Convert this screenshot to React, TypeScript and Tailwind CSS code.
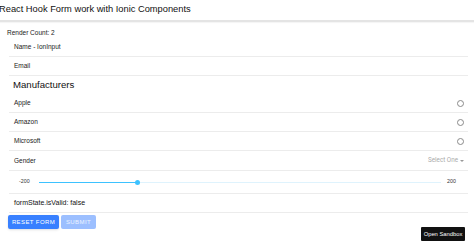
import React from 'react';

const font = { fontFamily: '"Liberation Sans", Arial, sans-serif' };

const Row = ({ children, h = 'h-[19px]', pr = 'pr-[4px]' }: { children: React.ReactNode; h?: string; pr?: string }) => (
  <div className={`flex items-center ${h} ml-[9px] mr-[6px] pl-[5px] ${pr} border-b border-[#ececec]`}>
    {children}
  </div>
);

const Radio = () => (
  <span className="w-[7px] h-[7px] rounded-full border border-[#8a8a8a] box-border" />
);

export default function App() {
  return (
    <div className="relative w-[474px] h-[248px] bg-white text-[#222] overflow-hidden" style={font}>
      <div className="h-[22px] flex items-center border-b-2 border-[#e4e4e4] shadow-[0_1px_1px_rgba(0,0,0,0.04)]">
        <span className="text-[9.3px] leading-none -ml-[1px] text-[#111]">
          React Hook Form work with Ionic Components
        </span>
      </div>

      <div className="pt-[7px]">
        <div className="px-[7px] text-[6.5px] leading-[8px]">Render Count: 2</div>

        <div className="mt-[1px]">
          <Row>
            <span className="text-[6.5px]">Name - IonInput</span>
          </Row>
          <Row>
            <span className="text-[6.5px]">Email</span>
          </Row>
        </div>

        <div className="h-[18px] flex items-center pl-[13px] text-[9.6px] text-[#111]">Manufacturers</div>

        <Row>
          <span className="text-[6.5px] flex-1">Apple</span>
          <Radio />
        </Row>
        <Row>
          <span className="text-[6.5px] flex-1">Amazon</span>
          <Radio />
        </Row>
        <Row>
          <span className="text-[6.5px] flex-1">Microsoft</span>
          <Radio />
        </Row>
        <Row h="h-[20px]">
          <span className="text-[6.5px] flex-1">Gender</span>
          <span className="text-[6.3px] text-[#aaa] flex items-center gap-[2px]" style={{ fontFamily: 'Roboto, sans-serif' }}>
            Select One
            <span className="w-0 h-0 border-l-[2px] border-r-[2px] border-t-[2px] border-l-transparent border-r-transparent border-t-[#999]" />
          </span>
        </Row>
        <Row h="h-[23px]" pr="pr-[11px]">
          <span className="text-[5.3px] w-[14px] ml-[5px] text-[#333]">-200</span>
          <div className="relative flex-1 h-[1px] bg-[#dff3fd] mx-[6px]">
            <div className="absolute left-0 top-0 h-[1px] w-[99px] bg-[#3dc2ff]" />
            <div className="absolute left-[96px] -top-[2px] w-[5px] h-[5px] rounded-full bg-[#3dc2ff]" />
          </div>
          <span className="text-[5.3px] w-[10px] text-[#333]">200</span>
        </Row>
        <Row>
          <span className="text-[7px] text-[#111]">formState.isValid: false</span>
        </Row>

        <div className="flex gap-[2px] pl-[8px] pt-[2px]">
          <button className="h-[14px] w-[51px] rounded-[2px] bg-[#3880ff] text-white text-[6px] tracking-[0.4px] shadow-sm">
            RESET FORM
          </button>
          <button className="h-[14px] w-[35px] rounded-[2px] bg-[#9cbfff] text-white/80 text-[6px] tracking-[0.4px]">
            SUBMIT
          </button>
        </div>
      </div>

      <div className="absolute left-[421px] top-[227px] w-[44px] h-[14px] bg-[#111] text-white text-[5.8px] flex items-center justify-center rounded-[1px]">
        Open Sandbox
      </div>
    </div>
  );
}
